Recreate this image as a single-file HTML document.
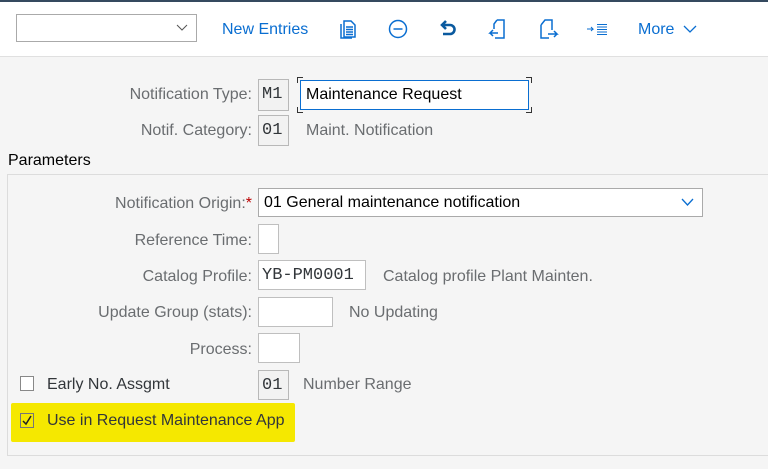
<!DOCTYPE html>
<html><head><style>
*{margin:0;padding:0;box-sizing:border-box}
body{width:768px;height:469px;overflow:hidden;background:#f5f5f5;font-family:"Liberation Sans",sans-serif;position:relative;color:#32363a}
.a{position:absolute}
.top{left:0;top:0;width:768px;height:57px;background:#fff;border-top:2px solid #354a5f;border-bottom:1px solid #e0e0e0}
.lbl{position:absolute;font-size:16px;color:#6a6d70;text-align:right;right:516px;white-space:nowrap}
.box{position:absolute;border:1px solid #bfbfbf;background:#fff;font-family:"Liberation Mono",monospace;font-size:17px;padding:5px 3px;color:#32363a}
.ro{background:#f2f2f2;border-color:#b8b8b8}
.txt{position:absolute;font-size:16px;color:#6a6d70;white-space:nowrap}
.ic{position:absolute;top:18px}
</style></head><body>
<div class="a top"></div>
<div class="a" style="left:16px;top:14px;width:181px;height:28px;border:1px solid #aaa;background:#fff"></div>
<svg class="a" style="left:176px;top:24px" width="12" height="8"><path d="M1 1l5 5 5-5" stroke="#555" fill="none"/></svg>
<div class="a" style="left:222px;top:21px;font-size:16px;color:#0a6ed1">New Entries</div>
<svg class="ic" style="left:337px" width="22" height="22" fill="none" stroke="#0a6ed1" stroke-width="1.5"><path d="M7 3h7l4 4v12H7z M4 6v14h11 M9 9h7M9 11.5h7M9 14h7M9 16.5h7"/></svg>
<svg class="ic" style="left:387px" width="22" height="22" fill="none" stroke="#0a6ed1" stroke-width="1.5"><circle cx="11" cy="11" r="8.5"/><path d="M6.5 11h9"/></svg>
<svg class="ic" style="left:437px" width="22" height="22" fill="none" stroke="#0a5a9f" stroke-width="2.6"><path d="M5 7h8a4.5 4.5 0 0 1 0 9H6 M9 3L5 7l4 4"/></svg>
<svg class="ic" style="left:487px" width="22" height="22" fill="none" stroke="#0a6ed1" stroke-width="1.5"><path d="M10 2h7v18H8 M10 2L7 6v5 M11 15H3l3-3M3 15l3 3"/></svg>
<svg class="ic" style="left:537px" width="22" height="22" fill="none" stroke="#0a6ed1" stroke-width="1.5"><path d="M4 7v13h8 M4 7l4-5h7v10 M11 16h9l-3-3M20 16l-3 3"/></svg>
<svg class="ic" style="left:586px" width="22" height="22" fill="none" stroke="#0a6ed1" stroke-width="1"><path d="M1 11h6l-2-2M7 11l-2 2 M11 6.5h10M11 9h10M11 11.5h10M11 14h10M11 16.5h10"/></svg>
<div class="a" style="left:638px;top:21px;font-size:16px;color:#0a6ed1">More</div>
<svg class="a" style="left:683px;top:25px" width="14" height="9"><path d="M1 1l6 6 6-6" stroke="#0a6ed1" fill="none" stroke-width="1.3"/></svg>

<div class="lbl" style="top:86px">Notification Type:</div>
<div class="box ro" style="left:258px;top:79px;width:31px;height:32px">M1</div>
<div class="a" style="left:300px;top:80px;width:229px;height:30px;border:1px solid #0a6ed1;background:#fff;font-size:16px;padding:5px 5px;color:#000">Maintenance Request</div>
<div class="a" style="left:297px;top:77px;width:235px;height:36px;border:1px solid #333;clip-path:polygon(0 0,6px 0,6px 2px,2px 2px,2px 6px,0 6px,0 100%,6px 100%,6px calc(100% - 2px),2px calc(100% - 2px),2px calc(100% - 6px),0 calc(100% - 6px))"></div>
<div class="a" style="left:297px;top:77px;width:235px;height:36px;border:1px solid #333;clip-path:polygon(100% 0,calc(100% - 6px) 0,calc(100% - 6px) 2px,calc(100% - 2px) 2px,calc(100% - 2px) 6px,100% 6px,100% 100%,calc(100% - 6px) 100%,calc(100% - 6px) calc(100% - 2px),calc(100% - 2px) calc(100% - 2px),calc(100% - 2px) calc(100% - 6px),100% calc(100% - 6px))"></div>
<div class="lbl" style="top:122px">Notif. Category:</div>
<div class="box ro" style="left:258px;top:115px;width:31px;height:31px">01</div>
<div class="txt" style="left:306px;top:122px">Maint. Notification</div>
<div class="a" style="left:8px;top:152px;font-size:16px;color:#000">Parameters</div>
<div class="a" style="left:7px;top:174px;width:770px;height:282px;border:1px solid #dcdcdc"></div>

<div class="lbl" style="top:195px">Notification Origin:<span style="color:#bb0000">*</span></div>
<div class="a" style="left:258px;top:188px;width:445px;height:29px;border:1px solid #aaa;background:#fff;font-size:16px;padding:5px 5px;color:#000">01 General maintenance notification</div>
<svg class="a" style="left:681px;top:198px" width="13" height="9"><path d="M1 1l5.5 6 5.5-6" stroke="#0a6ed1" fill="none" stroke-width="1.3"/></svg>
<div class="lbl" style="top:232px">Reference Time:</div>
<div class="box" style="left:258px;top:224px;width:21px;height:30px"></div>
<div class="lbl" style="top:268px">Catalog Profile:</div>
<div class="box" style="left:258px;top:260px;width:108px;height:30px">YB-PM0001</div>
<div class="txt" style="left:383px;top:268px">Catalog profile Plant Mainten.</div>
<div class="lbl" style="top:304px">Update Group (stats):</div>
<div class="box" style="left:258px;top:297px;width:75px;height:30px"></div>
<div class="txt" style="left:349px;top:304px">No Updating</div>
<div class="lbl" style="top:341px">Process:</div>
<div class="box" style="left:258px;top:333px;width:42px;height:30px"></div>
<div class="a" style="left:20px;top:376px;width:14px;height:15px;border:1px solid #888;background:#fff"></div>
<div class="a" style="left:47px;top:376px;font-size:16px;color:#32363a">Early No. Assgmt</div>
<div class="box ro" style="left:258px;top:370px;width:31px;height:30px">01</div>
<div class="txt" style="left:303px;top:376px">Number Range</div>
<div class="a" style="left:11px;top:403px;width:284px;height:39px;background:#f5e800;border-radius:2px"></div>
<div class="a" style="left:20px;top:413px;width:14px;height:15px;border:1px solid #777"></div>
<svg class="a" style="left:21px;top:414px" width="12" height="13"><path d="M2 7l3 3 5-8" stroke="#222" fill="none" stroke-width="1.5"/></svg>
<div class="a" style="left:47px;top:412px;font-size:16px;color:#32363a">Use in Request Maintenance App</div>
</body></html>
